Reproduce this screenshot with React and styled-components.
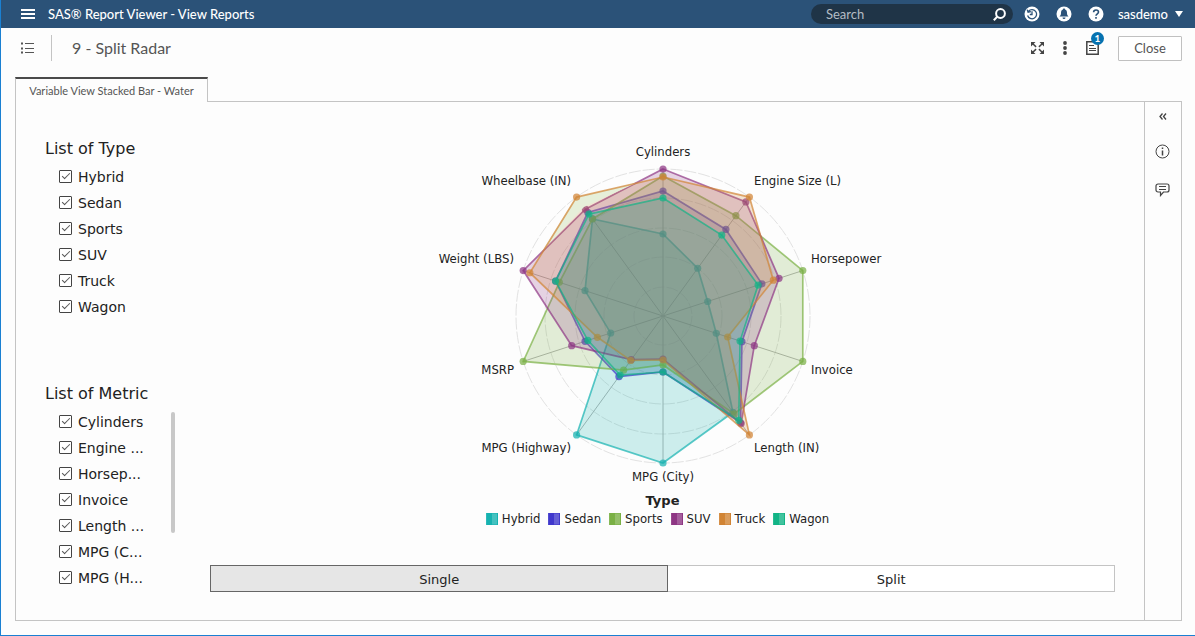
import React from "react";
import styled, { createGlobalStyle } from "styled-components";

const ui = `Lato, "Liberation Sans", sans-serif`;
const report = `"DejaVu Sans", Verdana, sans-serif`;
const chartFont = `"DejaVu Sans Condensed", Tahoma, "Noto Sans", sans-serif`;

const GlobalStyle = createGlobalStyle`
  *, *::before, *::after { box-sizing: border-box; }
  body { margin: 0; background: #fdfdfd; color: #222; font-family: ${ui}; }
  button, input { font: inherit; color: inherit; }
  svg { display: block; flex: none; }
`;

const Page = styled.div`
  min-height: 100vh;
  display: flex;
  flex-direction: column;
  border-left: 1px solid #1a80d2;
  border-bottom: 1px solid #1a80d2;
`;
const Banner = styled.header`
  display: flex;
  align-items: center;
  height: 28px;
  padding: 0 12px 0 20px;
  background: #2b5278;
  color: #fff;
  font-size: 13px;
`;
const IconButton = styled.button`
  display: flex;
  position: relative;
  padding: 0;
  border: 0;
  background: none;
  color: inherit;
`;
const AppName = styled.h1`
  margin: 0 auto 0 13px;
  font-size: 13px;
  line-height: 28px;
  font-weight: 500;
`;
const BannerTools = styled.div`
  display: flex;
  align-items: center;
  gap: 11px;
`;
const BannerIcons = styled.div`
  display: flex;
  align-items: center;
  gap: 16px;
`;
const SearchBox = styled.label`
  display: flex;
  align-items: center;
  width: 202px;
  height: 20px;
  padding: 0 7px 0 15px;
  border-radius: 10px;
  background: #1f3447;
`;
const SearchInput = styled.input`
  flex: 1;
  min-width: 0;
  padding: 0;
  border: 0;
  outline: 0;
  background: none;
  &::placeholder { color: #b4bcc4; opacity: 1; }
`;
const UserButton = styled.button`
  display: flex;
  align-items: center;
  gap: 7px;
  margin-left: 3px;
  padding: 0;
  border: 0;
  background: none;
  font-weight: 500;
`;
const TitleBar = styled.div`
  display: flex;
  align-items: center;
  height: 40px;
  padding: 0 13px 0 19px;
  color: #444;
`;
const Title = styled.h2`
  margin: 0 auto 0 16px;
  padding-left: 20px;
  border-left: 1px solid #c4c4c4;
  font-size: 16px;
  line-height: 26px;
  font-weight: 400;
  color: #555;
`;
const TitleTools = styled.div`
  display: flex;
  align-items: center;
  gap: 19px;
`;
const Badge = styled.span`
  position: absolute;
  top: -9px;
  right: -5px;
  width: 13px;
  height: 13px;
  border-radius: 50%;
  background: #0672b0;
  color: #fff;
  font-size: 10px;
  line-height: 13px;
  font-weight: 700;
  text-align: center;
`;
const CloseButton = styled.button`
  width: 64px;
  height: 25px;
  padding: 0;
  border: 1px solid #c0c0c0;
  border-radius: 1px;
  background: #fff;
  font-size: 13px;
  color: #555;
`;
const Workspace = styled.main`
  flex: 1;
  display: flex;
  flex-direction: column;
  padding: 9px 13px 14px 14px;
`;
const Tab = styled.button`
  position: relative;
  align-self: flex-start;
  width: 193px;
  height: 25px;
  margin-bottom: -1px;
  padding: 0;
  border: 1px solid #c4c4c4;
  border-top: 2px solid #4a4a4a;
  border-bottom: 0;
  background: #fdfdfd;
  font-size: 11px;
  color: #555;
`;
const Panel = styled.div`
  flex: 1;
  display: flex;
  border: 1px solid #c4c4c4;
`;
const Report = styled.div`
  flex: 1;
  min-width: 0;
  display: flex;
  gap: 34px;
  padding: 33px 29px 28px;
`;
const Rail = styled.nav`
  display: flex;
  flex-direction: column;
  align-items: center;
  gap: 24px;
  width: 37px;
  padding: 11px 1px 0 0;
  border-left: 1px solid #c4c4c4;
  color: #444;
`;
const Filters = styled.aside`
  display: flex;
  flex-direction: column;
  gap: 60px;
  width: 130px;
  margin-right: 1px;
  font-family: ${report};
`;
const Filter = styled.fieldset`
  min-width: 0;
  margin: 0;
  padding: 0;
  border: 0;
`;
const Legend = styled.legend`
  padding: 0;
  font-size: 16px;
  line-height: 28px;
`;
const Scroller = styled.div`
  display: flex;
  justify-content: space-between;
  align-items: flex-start;
`;
const Options = styled.div`
  width: 101px;
  padding: 1px 0 0 14px;
`;
const Option = styled.label`
  display: flex;
  align-items: center;
  gap: 6px;
  height: 26px;
  font-size: 14px;
  white-space: nowrap;
`;
const Check = styled.input`
  appearance: none;
  flex: none;
  width: 13px;
  height: 13px;
  margin: 0 0 1px;
  border: 1px solid #444;
  border-radius: 1px;
  background: #fff;
  display: grid;
  place-items: center;
  &:checked::before {
    content: "";
    width: 8px;
    height: 4px;
    margin-bottom: 3px;
    border: solid #555;
    border-width: 0 0 1px 1px;
    transform: rotate(-45deg);
  }
`;
const Thumb = styled.div`
  width: 4px;
  height: 121px;
  margin-top: 4px;
  border-radius: 2px;
  background: #c8c8c8;
`;
const Content = styled.section`
  flex: 1;
  min-width: 0;
  display: flex;
  flex-direction: column;
  font-family: ${chartFont};
`;
const Chart = styled.svg`
  width: 460px;
  height: 355px;
  align-self: center;
  font-size: 13px;
  fill: #222;
`;
const Key = styled.div`
  display: flex;
  flex-direction: column;
  align-items: center;
  font-size: 13px;
  padding-right: 10px;
`;
const KeyTitle = styled.h3`
  margin: 0 0 0 10px;
  font-family: ${report};
  font-size: 13px;
  line-height: 21px;
`;
const KeyItems = styled.ul`
  display: flex;
  gap: 8px;
  margin: 0;
  padding: 0;
  list-style: none;
`;
const KeyItem = styled.li`
  display: flex;
  align-items: center;
  gap: 4px;
  line-height: 16px;
  &::before {
    content: "";
    width: 12px;
    height: 12px;
    border: 1px solid ${(p) => p.$color}88;
    background: linear-gradient(90deg, ${(p) => p.$color} 50%, ${(p) => p.$color}cc 50%);
  }
`;
const Toggle = styled.div`
  display: flex;
  margin-top: auto;
  font-family: ${report};
  font-size: 13px;
`;
const ToggleButton = styled.button`
  flex: ${(p) => (p.$on ? "458" : "447")} 1 0;
  height: 27px;
  padding: 2px 0 0;
  border: 1px solid ${(p) => (p.$on ? "#666" : "#c4c4c4")};
  border-left-width: ${(p) => (p.$on ? "1px" : "0")};
  background: ${(p) => (p.$on ? "#e6e6e6" : "#fff")};
`;

const axes = [
  ["Cylinders", 232, 21, "middle"],
  ["Engine Size (L)", 323, 50, "start"],
  ["Horsepower", 380, 128, "start"],
  ["Invoice", 380, 239, "start"],
  ["Length (IN)", 323, 317, "start"],
  ["MPG (City)", 232, 346, "middle"],
  ["MPG (Highway)", 140, 317, "end"],
  ["MSRP", 83, 239, "end"],
  ["Weight (LBS)", 83, 128, "end"],
  ["Wheelbase (IN)", 140, 50, "end"],
];

const series = [
  { name: "Hybrid", color: "#16b2b0", values: [82, 59, 47, 56, 119, 147, 147, 55, 82, 120] },
  { name: "Sedan", color: "#4038cc", values: [125, 107, 104, 83, 132, 56, 75, 82, 113, 128] },
  { name: "Sports", color: "#7ab045", values: [140, 124, 147, 147, 121, 49, 67, 147, 109, 120] },
  { name: "SUV", color: "#8e3684", values: [147, 141, 122, 96, 133, 43, 54, 96, 147, 132] },
  {
    name: "Truck",
    color: "#d18434",
    values: [139, 147, 116, 68, 147, 44, 55, 69, 140, 147],
    tip: "112,115 145,62 205,48 153,72",
  },
  { name: "Wagon", color: "#12b486", values: [118, 100, 100, 81, 129, 56, 73, 79, 113, 126] },
];

const cx = 232;
const cy = 181;
const at = (r, i) => {
  const a = (i * Math.PI) / 5;
  return [cx + r * Math.sin(a), cy - r * Math.cos(a)];
};

function Radar() {
  return (
    <Chart viewBox="2 0 460 355" role="img" aria-label="Vehicle metrics by type">
      {[29, 59, 88, 118, 147].map((r) => (
        <circle key={r} cx={cx} cy={cy} r={r} fill="none" stroke="#e2e2e2" strokeDasharray="12 2" />
      ))}
      {axes.map(([name], i) => {
        const [x, y] = at(147, i);
        return <line key={name} x1={cx} y1={cy} x2={x} y2={y} stroke="#b4b4b4" />;
      })}
      {series.map((s) => {
        const outline = s.values.map((v, i) => at(v, i).join()).join(" ");
        return (
          <g key={s.name} fill={s.color}>
            <polygon points={outline} fillOpacity="0.21" />
            {s.tip && <polygon points={s.tip} fill="#e6efd9" />}
            <polygon points={outline} fill="none" stroke={s.color} strokeOpacity="0.7" strokeWidth="1.7" />
            {s.values.map((v, i) => (
              <circle key={i} cx={at(v, i)[0]} cy={at(v, i)[1]} r="3.6" fillOpacity="0.72" />
            ))}
          </g>
        );
      })}
      {axes.map(([name, x, y, anchor]) => (
        <text key={name} x={x} y={y} textAnchor={anchor}>{name}</text>
      ))}
    </Chart>
  );
}

function CheckList({ title, items, scroll }) {
  return (
    <Filter>
      <Legend>{title}</Legend>
      <Scroller>
        <Options>
          {items.map((item) => (
            <Option key={item}>
              <Check type="checkbox" defaultChecked />
              {item}
            </Option>
          ))}
        </Options>
        {scroll && <Thumb />}
      </Scroller>
    </Filter>
  );
}

export default function App() {
  return (
    <Page>
      <GlobalStyle />
      <Banner>
        <IconButton aria-label="Menu">
          <svg width="14" height="10" viewBox="0 0 14 10" fill="currentColor">
            <path d="M0 0h14v2H0zM0 4h14v2H0zM0 8h14v2H0z" />
          </svg>
        </IconButton>
        <AppName>SAS® Report Viewer - View Reports</AppName>
        <BannerTools>
          <SearchBox>
            <SearchInput type="text" placeholder="Search" aria-label="Search" />
            <svg width="13" height="13" viewBox="0 0 13 13" fill="none" stroke="#fff" strokeWidth="2">
              <circle cx="7.5" cy="5.5" r="4.4" />
              <path d="M4.2 8.8 .8 12.2" />
            </svg>
          </SearchBox>
          <BannerIcons>
            <IconButton aria-label="Recent">
              <svg width="16" height="16" viewBox="0 0 16 16" fill="none">
                <circle cx="8" cy="8" r="7.5" fill="#fff" />
                <path d="M4.5 5.2A4.6 4.6 0 1 1 3.6 9.5M3.2 3.6l.9 2.6 2.8-.5M8 5.2v3.3H5.8" stroke="#2b5278" strokeWidth="1.3" />
              </svg>
            </IconButton>
            <IconButton aria-label="Notifications">
              <svg width="16" height="16" viewBox="0 0 16 16">
                <circle cx="8" cy="8" r="7.5" fill="#fff" />
                <path d="M8 2.5c.8 0 1 .5 1 1 1.8.5 2 2 2 3.5 0 1.8.5 2.5 1.5 3.5h-9C4.5 9.5 5 8.8 5 7c0-1.5.2-3 2-3.5 0-.5.2-1 1-1zM6.500 11.500h3a1.500 1.500 0 0 1-3 0z" fill="#2b5278" />
              </svg>
            </IconButton>
            <IconButton aria-label="Help">
              <svg width="16" height="16" viewBox="0 0 16 16" fill="none">
                <circle cx="8" cy="8" r="7.5" fill="#fff" />
                <path d="M5.6 6.3C5.6 4.7 6.6 4 8 4s2.5.8 2.5 2.1C10.5 7.8 8 7.8 8 9.8M8 11v1.7" stroke="#2b5278" strokeWidth="1.6" />
              </svg>
            </IconButton>
          </BannerIcons>
          <UserButton>
            sasdemo
            <svg width="8" height="6" viewBox="0 0 8 6" fill="currentColor"><path d="M0 0h8L4 6z" /></svg>
          </UserButton>
        </BannerTools>
      </Banner>

      <TitleBar>
        <IconButton aria-label="Outline">
          <svg width="15" height="12" viewBox="0 0 15 12" fill="none" stroke="#555">
            <path d="M5 1.5h9M5 6.5h9M5 10.5h9" />
            <path d="M1 1.5h2M1 6.5h2M1 10.5h2" strokeWidth="2" />
          </svg>
        </IconButton>
        <Title>9 - Split Radar</Title>
        <TitleTools>
          <IconButton aria-label="Full screen">
            <svg width="13" height="12" viewBox="0 0 13 12" fill="#444" stroke="#444">
              <path stroke="none" d="M0 0h4.5L0 4.5zM13 0H8.5L13 4.5zM0 12h4.5L0 7.5zM13 12H8.5L13 7.5z" />
              <path strokeWidth="1.5" d="m1.5 1.5 3.6 3.4M11.5 1.5 7.9 4.9M1.5 10.5l3.6-3.4M11.5 10.5 7.9 7.1" />
            </svg>
          </IconButton>
          <IconButton aria-label="More">
            <svg width="4" height="14" viewBox="0 0 4 14" fill="#444">
              <circle cx="2" cy="2" r="1.9" /><circle cx="2" cy="7" r="1.9" /><circle cx="2" cy="12" r="1.9" />
            </svg>
          </IconButton>
          <IconButton aria-label="Report messages">
            <svg width="13" height="14" viewBox="0 0 13 14" fill="none" stroke="#444">
              <path strokeWidth="1.5" d="M.8.8h11.4v12.4H.8z" />
              <path d="M3 4.5h5M3 7.5h7M3 9.5h7" />
            </svg>
            <Badge>1</Badge>
          </IconButton>
          <CloseButton>Close</CloseButton>
        </TitleTools>
      </TitleBar>

      <Workspace>
        <Tab>Variable View Stacked Bar - Water</Tab>
        <Panel>
          <Report>
            <Filters>
              <CheckList title="List of Type" items={series.map((s) => s.name)} />
              <CheckList
                title="List of Metric"
                scroll
                items={["Cylinders", "Engine ...", "Horsep...", "Invoice", "Length ...", "MPG (C...", "MPG (H..."]}
              />
            </Filters>
            <Content>
              <Radar />
              <Key>
                <KeyTitle>Type</KeyTitle>
                <KeyItems>
                  {series.map((s) => (
                    <KeyItem key={s.name} $color={s.color}>{s.name}</KeyItem>
                  ))}
                </KeyItems>
              </Key>
              <Toggle>
                <ToggleButton $on aria-pressed="true">Single</ToggleButton>
                <ToggleButton aria-pressed="false">Split</ToggleButton>
              </Toggle>
            </Content>
          </Report>
          <Rail>
            <IconButton aria-label="Expand">
              <svg width="8" height="7" viewBox="0 0 8 7" fill="none" stroke="currentColor" strokeWidth="1.3">
                <path d="M3.5.5 1 3.5l2.5 3M7 .5 4.5 3.5 7 6.5" />
              </svg>
            </IconButton>
            <IconButton aria-label="Information">
              <svg width="15" height="15" viewBox="0 0 15 15" fill="none" stroke="currentColor">
                <circle cx="7.5" cy="7.5" r="6.5" />
                <path d="M7.5 3.5V5M7.5 6.5v5" strokeWidth="1.5" />
              </svg>
            </IconButton>
            <IconButton aria-label="Comments">
              <svg width="15" height="14" viewBox="0 0 15 14" fill="none" stroke="currentColor" strokeWidth="1.2">
                <path d="M3 1h9a2 2 0 0 1 2 2v4a2 2 0 0 1-2 2H8.5L5.5 12.5V9H3a2 2 0 0 1-2-2V3a2 2 0 0 1 2-2z" />
                <path d="M4 3.5h7M4 6.5h7" strokeWidth="1" />
              </svg>
            </IconButton>
          </Rail>
        </Panel>
      </Workspace>
    </Page>
  );
}
